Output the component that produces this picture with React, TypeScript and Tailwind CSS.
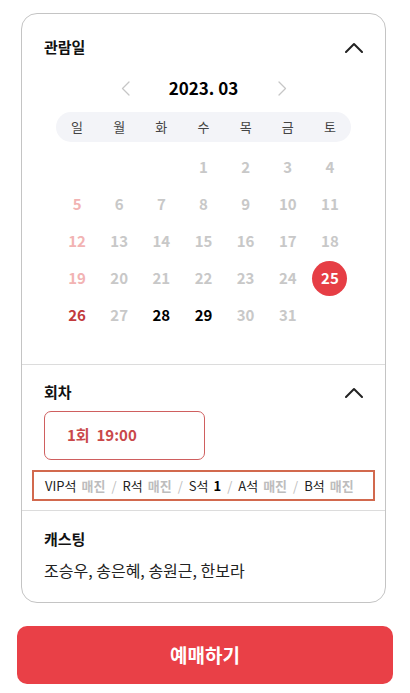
const FONT = { fontFamily: "'Noto Sans CJK KR', 'Noto Sans', sans-serif" };

type Day = { d: number | null; tone: 'off' | 'offSun' | 'sun' | 'on' | 'sel' };

const weeks: Day[][] = [
  [
    { d: null, tone: 'off' }, { d: null, tone: 'off' }, { d: null, tone: 'off' },
    { d: 1, tone: 'off' }, { d: 2, tone: 'off' }, { d: 3, tone: 'off' }, { d: 4, tone: 'off' },
  ],
  [5, 6, 7, 8, 9, 10, 11].map((d, i) => ({ d, tone: i === 0 ? 'offSun' : 'off' }) as Day),
  [12, 13, 14, 15, 16, 17, 18].map((d, i) => ({ d, tone: i === 0 ? 'offSun' : 'off' }) as Day),
  [19, 20, 21, 22, 23, 24, 25].map((d, i) => ({ d, tone: i === 0 ? 'offSun' : i === 6 ? 'sel' : 'off' }) as Day),
  [
    { d: 26, tone: 'sun' }, { d: 27, tone: 'off' }, { d: 28, tone: 'on' }, { d: 29, tone: 'on' },
    { d: 30, tone: 'off' }, { d: 31, tone: 'off' }, { d: null, tone: 'off' },
  ],
];

const toneClass = {
  off: 'text-[#c8c8c8]',
  offSun: 'text-[#f2b3b3]',
  sun: 'text-[#c23a3c]',
  on: 'text-black',
  sel: 'text-white',
};

function ChevronUp() {
  return (
    <svg width="18" height="11" viewBox="0 0 18 11" fill="none">
      <polyline points="1,10 9,2 17,10" stroke="#222" strokeWidth="2" strokeLinecap="round" strokeLinejoin="round" />
    </svg>
  );
}

function Arrow({ dir }: { dir: 'left' | 'right' }) {
  return (
    <svg width="9" height="15" viewBox="0 0 9 15" fill="none">
      <polyline
        points={dir === 'left' ? '8,1 1.5,7.5 8,14' : '1,1 7.5,7.5 1,14'}
        stroke="#c6c6c6"
        strokeWidth="1.3"
        strokeLinecap="round"
        strokeLinejoin="round"
      />
    </svg>
  );
}

function SeatInfo() {
  const seats: [string, string, boolean][] = [
    ['VIP석', '매진', true],
    ['R석', '매진', true],
    ['S석', '1', false],
    ['A석', '매진', true],
    ['B석', '매진', true],
  ];
  return (
    <div className="mx-[10px] mt-[10px] border-2 border-[#d2694e] h-[31px] flex items-center pl-[11px] text-[13px] text-[#222] whitespace-nowrap">
      {seats.map(([name, left, sold], i) => (
        <span key={name} className="flex items-center">
          <span>{name}</span>
          <span className={`ml-[5px] font-bold ${sold ? 'text-[#bdbdbd]' : 'text-black'}`}>{left}</span>
          {i < seats.length - 1 && <span className="text-[#bdbdbd] mx-[6px]">/</span>}
        </span>
      ))}
    </div>
  );
}

export default function App() {
  return (
    <div className="w-[410px] h-[693px] bg-white overflow-hidden" style={FONT}>
      <div className="ml-[21px] mt-[13px] w-[365px] border border-[#c4c4c4] rounded-[16px]">
        {/* 관람일 */}
        <div className="pt-[22px] pb-[30px]">
          <div className="flex items-center justify-between px-[22px] h-[22px]">
            <h2 className="text-[15px] font-bold text-[#111]">관람일</h2>
            <ChevronUp />
          </div>
          <div className="flex items-center justify-center mt-[18px] h-[24px]">
            <Arrow dir="left" />
            <span className="w-[148px] text-center text-[17px] font-bold text-black">2023. 03</span>
            <Arrow dir="right" />
          </div>
          <div className="mx-[34px] mt-[12px]">
            <div className="grid grid-cols-7 h-[30px] items-center bg-[#f3f4f8] rounded-full text-[13px] text-[#444]">
              {['일', '월', '화', '수', '목', '금', '토'].map((w) => (
                <span key={w} className="text-center">{w}</span>
              ))}
            </div>
            <div className="mt-[7px]">
              {weeks.map((week, wi) => (
                <div key={wi} className="grid grid-cols-7 h-[37px] items-center">
                  {week.map((day, di) => (
                    <div key={di} className="flex justify-center">
                      {day.d !== null && (
                        <span
                          className={`w-[35px] h-[35px] flex items-center justify-center rounded-full text-[15px] font-bold ${toneClass[day.tone]} ${day.tone === 'sel' ? 'bg-[#e63e45]' : ''}`}
                        >
                          {day.d}
                        </span>
                      )}
                    </div>
                  ))}
                </div>
              ))}
            </div>
          </div>
        </div>

        {/* 회차 */}
        <div className="border-t border-[#dcdcdc] pt-[16px] pb-[9px]">
          <div className="flex items-center justify-between px-[22px] h-[22px]">
            <h2 className="text-[15px] font-bold text-[#111]">회차</h2>
            <ChevronUp />
          </div>
          <div className="px-[22px] mt-[8px]">
            <button className="w-[161px] h-[49px] border border-[#cf5f5f] rounded-[7px] flex items-center pl-[22px] text-[15px] font-bold text-[#c9484a]">
              1회&nbsp;&nbsp;19:00
            </button>
          </div>
          <SeatInfo />
        </div>

        {/* 캐스팅 */}
        <div className="border-t border-[#dcdcdc] pt-[17px] pb-[21px] px-[22px]">
          <h2 className="text-[15px] font-bold text-[#111] leading-[22px]">캐스팅</h2>
          <p className="mt-[9px] text-[16px] text-[#222] leading-[22px]">조승우, 송은혜, 송원근, 한보라</p>
        </div>
      </div>

      <div className="px-[17px] mt-[23px]">
        <button className="w-full h-[58px] rounded-[10px] bg-[#e94047] text-white text-[19px] font-bold">
          예매하기
        </button>
      </div>
    </div>
  );
}
